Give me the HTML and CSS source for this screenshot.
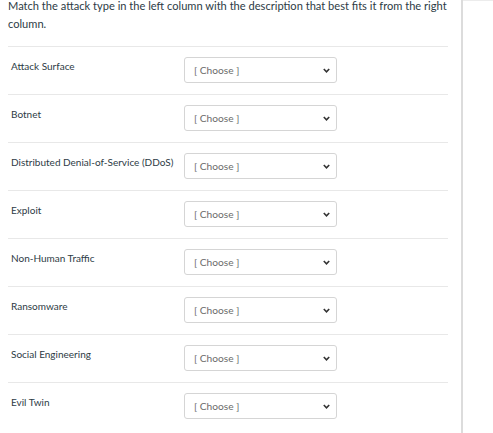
FILE: index.html
```html
<!DOCTYPE html>
<html>
<head>
<meta charset="utf-8">
<link rel="stylesheet" href="styles.css">
</head>
<body>
<div class="page">
  <div class="content">
    <p class="question">Match the attack type in the left column with the description that best fits it from the right column.</p>
    <div class="rows">
      <div class="row"><div class="label">Attack Surface</div><div class="sel"><span>[ Choose ]</span><svg class="chev" width="7" height="5" viewBox="0 0 7 5"><path d="M0.8 1 L3.5 3.8 L6.2 1" fill="none" stroke="#333" stroke-width="1.6"/></svg></div></div>
      <div class="row"><div class="label">Botnet</div><div class="sel"><span>[ Choose ]</span><svg class="chev" width="7" height="5" viewBox="0 0 7 5"><path d="M0.8 1 L3.5 3.8 L6.2 1" fill="none" stroke="#333" stroke-width="1.6"/></svg></div></div>
      <div class="row"><div class="label">Distributed Denial-of-Service (DDoS)</div><div class="sel"><span>[ Choose ]</span><svg class="chev" width="7" height="5" viewBox="0 0 7 5"><path d="M0.8 1 L3.5 3.8 L6.2 1" fill="none" stroke="#333" stroke-width="1.6"/></svg></div></div>
      <div class="row"><div class="label">Exploit</div><div class="sel"><span>[ Choose ]</span><svg class="chev" width="7" height="5" viewBox="0 0 7 5"><path d="M0.8 1 L3.5 3.8 L6.2 1" fill="none" stroke="#333" stroke-width="1.6"/></svg></div></div>
      <div class="row"><div class="label">Non-Human Traffic</div><div class="sel"><span>[ Choose ]</span><svg class="chev" width="7" height="5" viewBox="0 0 7 5"><path d="M0.8 1 L3.5 3.8 L6.2 1" fill="none" stroke="#333" stroke-width="1.6"/></svg></div></div>
      <div class="row"><div class="label">Ransomware</div><div class="sel"><span>[ Choose ]</span><svg class="chev" width="7" height="5" viewBox="0 0 7 5"><path d="M0.8 1 L3.5 3.8 L6.2 1" fill="none" stroke="#333" stroke-width="1.6"/></svg></div></div>
      <div class="row"><div class="label">Social Engineering</div><div class="sel"><span>[ Choose ]</span><svg class="chev" width="7" height="5" viewBox="0 0 7 5"><path d="M0.8 1 L3.5 3.8 L6.2 1" fill="none" stroke="#333" stroke-width="1.6"/></svg></div></div>
      <div class="row last"><div class="label">Evil Twin</div><div class="sel"><span>[ Choose ]</span><svg class="chev" width="7" height="5" viewBox="0 0 7 5"><path d="M0.8 1 L3.5 3.8 L6.2 1" fill="none" stroke="#333" stroke-width="1.6"/></svg></div></div>
    </div>
  </div>
  <div class="side"></div>
</div>
</body>
</html>
```
FILE: styles.css
```css
html, body {
  margin: 0;
  padding: 0;
  background: #fff;
  overflow: hidden;
}
body {
  font-family: Lato, "Noto Sans", sans-serif;
  color: #2d3b45;
}
.page {
  display: flex;
  height: 433px;
}
.content {
  width: 440px;
  padding: 0 13px 0 8px;
  border-right: 2px solid #dcdcdc;
}
.side {
  flex: 1;
  border-top: 1px solid #ececec;
}
.question {
  margin: -3px 0 0 0;
  font-size: 11.1px;
  line-height: 18px;
  padding-bottom: 13px;
  border-bottom: 1px solid #e8e8e8;
}
.row {
  display: flex;
  height: 47px;
  border-bottom: 1px solid #e8e8e8;
}
.row.last {
  border-bottom: none;
}
.label {
  width: 173px;
  padding: 13px 0 0 3px;
  font-size: 10px;
  line-height: 12px;
}
.sel {
  margin-top: 10px;
  width: 136px;
  height: 24px;
  border: 1px solid #d5d5d5;
  border-radius: 3px;
  display: flex;
  align-items: center;
  justify-content: space-between;
  padding: 0 6px 0 9px;
  font-size: 10.2px;
  color: #6b6b6b;
}
.chev { display: block; }
```
